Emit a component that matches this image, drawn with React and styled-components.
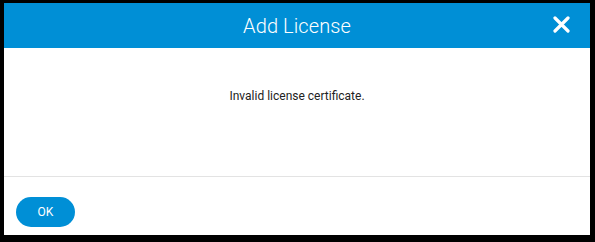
import React from "react";
import styled, { createGlobalStyle } from "styled-components";

const GlobalStyle = createGlobalStyle`
  html, body {
    margin: 0;
    padding: 0;
    background: #000;
  }
  body {
    font-family: Roboto, "Liberation Sans", Arial, sans-serif;
  }
`;

export const Page = styled.div`
  width: 595px;
  height: 242px;
  padding: 3px 0 0 4px;
  box-sizing: border-box;
`;

export const Dialog = styled.div`
  width: 586px;
  height: 232px;
  background: #fff;
  display: flex;
  flex-direction: column;
`;

export const Header = styled.div`
  height: 45px;
  background: #008fd6;
  display: flex;
  align-items: center;
  justify-content: center;
  position: relative;
`;

export const Title = styled.h2`
  margin: 0;
  font-weight: 300;
  font-size: 20px;
  color: #fff;
  letter-spacing: 0.1px;
`;

export const CloseButton = styled.button`
  position: absolute;
  right: 19px;
  top: 11px;
  width: 20px;
  height: 20px;
  padding: 0;
  border: none;
  background: none;
  cursor: pointer;
  display: flex;
  align-items: center;
  justify-content: center;
`;

export const Body = styled.div`
  height: 129px;
  box-sizing: border-box;
  padding-top: 41px;
  text-align: center;
  font-size: 12px;
  color: #222;
  border-bottom: 1px solid #e3e3e3;
`;

export const Footer = styled.div`
  flex: 1;
  padding: 20px 12px 0;
`;

export const OkButton = styled.button`
  width: 59px;
  height: 30px;
  border: none;
  border-radius: 15px;
  background: #008fd6;
  color: #fff;
  font-family: Roboto, "Liberation Sans", Arial, sans-serif;
  font-size: 12px;
  cursor: pointer;
`;

export default function App() {
  return (
    <>
      <GlobalStyle />
      <Page>
        <Dialog>
          <Header>
            <Title>Add License</Title>
            <CloseButton aria-label="Close">
              <svg width="17" height="17" viewBox="0 0 17 17">
                <path
                  d="M2 2 L15 15 M15 2 L2 15"
                  stroke="#fff"
                  strokeWidth="3.2"
                  strokeLinecap="round"
                />
              </svg>
            </CloseButton>
          </Header>
          <Body>Invalid license certificate.</Body>
          <Footer>
            <OkButton>OK</OkButton>
          </Footer>
        </Dialog>
      </Page>
    </>
  );
}
